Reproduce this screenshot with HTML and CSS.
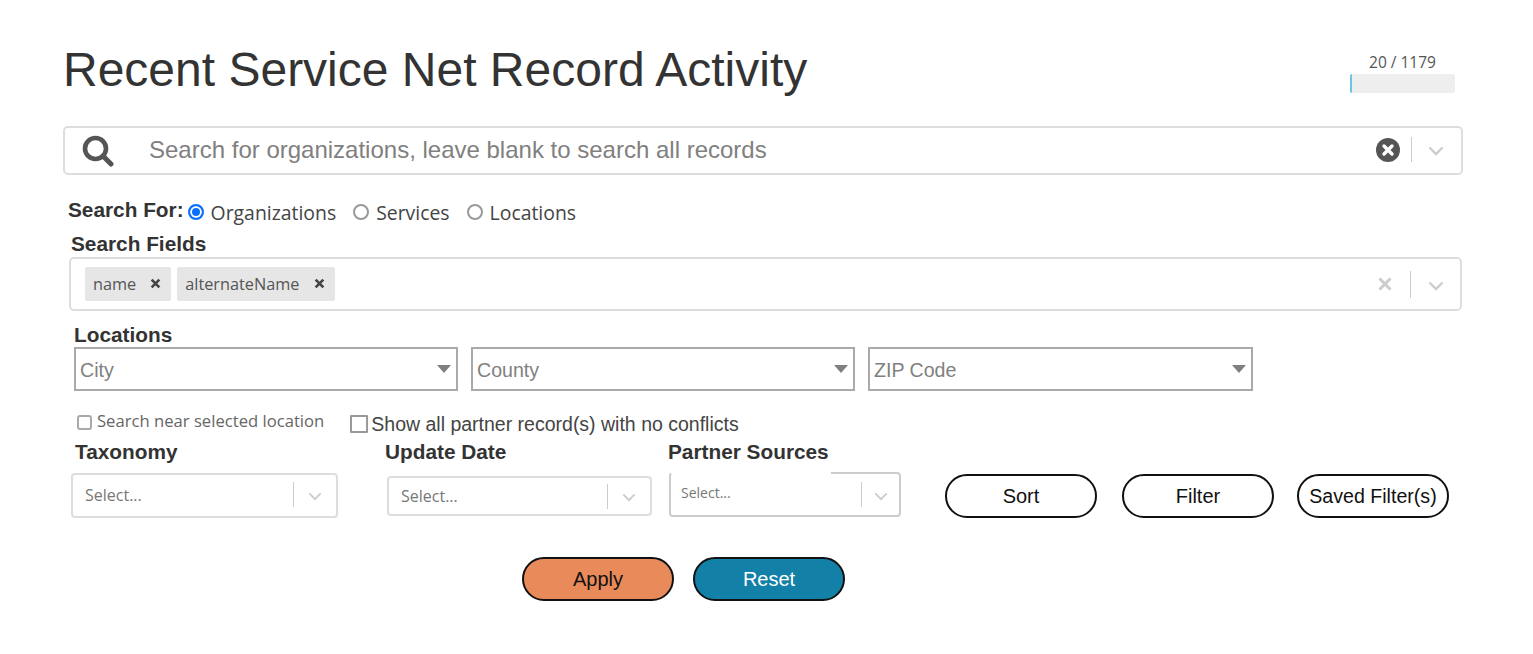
FILE: index.html
```html
<!DOCTYPE html>
<html lang="en">
<head>
<meta charset="utf-8">
<title>Recent Service Net Record Activity</title>
<link rel="stylesheet" href="styles.css">
</head>
<body>
<main class="page">
  <header class="head">
    <h1 class="title">Recent Service Net Record Activity</h1>
    <div class="progress">
      <div class="progress-text">20 / 1179</div>
      <div class="progress-track"><div class="progress-fill"></div></div>
    </div>
  </header>

  <div class="searchbox">
    <svg class="search-icon" viewBox="0 0 32 32" aria-hidden="true"><circle cx="13.5" cy="13.5" r="10.5" fill="none" stroke="#555" stroke-width="4.6"/><path d="M21 21l8 8" stroke="#555" stroke-width="5" stroke-linecap="round"/></svg>
    <span class="search-placeholder">Search for organizations, leave blank to search all records</span>
    <svg class="clear-icon" viewBox="0 0 24 24" aria-hidden="true"><circle cx="12" cy="12" r="12" fill="#555"/><path d="M8 8l8 8M16 8l-8 8" stroke="#fff" stroke-width="3.4" stroke-linecap="round"/></svg>
    <span class="sep sep-tall"></span>
    <svg class="chev chev-big" viewBox="0 0 16 10" aria-hidden="true"><path d="M1.5 1.5L8 8l6.5-6.5" fill="none" stroke="#ccc" stroke-width="2.4"/></svg>
  </div>

  <div class="search-for">
    <span class="label">Search For:</span>
    <span class="radio radio-on"></span><span class="radio-text">Organizations</span>
    <span class="radio radio-second"></span><span class="radio-text">Services</span>
    <span class="radio radio-third"></span><span class="radio-text">Locations</span>
  </div>

  <div class="label fields-label">Search Fields</div>
  <div class="multibox">
    <span class="tag">name<svg class="tag-x" viewBox="0 0 10 10" aria-hidden="true"><path d="M1.5 1.5l7 7M8.5 1.5l-7 7" stroke="#444" stroke-width="2.4"/></svg></span>
    <span class="tag">alternateName<svg class="tag-x" viewBox="0 0 10 10" aria-hidden="true"><path d="M1.5 1.5l7 7M8.5 1.5l-7 7" stroke="#444" stroke-width="2.4"/></svg></span>
    <svg class="multi-x" viewBox="0 0 14 14" aria-hidden="true"><path d="M1.5 1.5l11 11M12.5 1.5l-11 11" stroke="#ccc" stroke-width="3"/></svg>
    <span class="sep sep-multi"></span>
    <svg class="chev chev-big" viewBox="0 0 16 10" aria-hidden="true"><path d="M1.5 1.5L8 8l6.5-6.5" fill="none" stroke="#ccc" stroke-width="2.4"/></svg>
  </div>

  <div class="label locations-label">Locations</div>
  <div class="locations">
    <div class="dropdown"><span>City</span><i class="caret"></i></div>
    <div class="dropdown"><span>County</span><i class="caret"></i></div>
    <div class="dropdown"><span>ZIP Code</span><i class="caret"></i></div>
  </div>

  <div class="checks">
    <span class="check-small"></span><span class="check-small-text">Search near selected location</span>
    <span class="check-big"></span><span class="check-big-text">Show all partner record(s) with no conflicts</span>
  </div>

  <div class="filters">
    <div class="filter filter-tax">
      <div class="label">Taxonomy</div>
      <div class="select select-tax"><span class="select-text">Select...</span><span class="sep sep-small"></span><svg class="chev chev-small" viewBox="0 0 16 10" aria-hidden="true"><path d="M1.5 1.5L8 8l6.5-6.5" fill="none" stroke="#ccc" stroke-width="2.2"/></svg></div>
    </div>
    <div class="filter filter-date">
      <div class="label">Update Date</div>
      <div class="select select-date"><span class="select-text">Select...</span><span class="sep sep-small"></span><svg class="chev chev-small" viewBox="0 0 16 10" aria-hidden="true"><path d="M1.5 1.5L8 8l6.5-6.5" fill="none" stroke="#ccc" stroke-width="2.2"/></svg></div>
    </div>
    <div class="filter filter-partner">
      <div class="label">Partner Sources</div>
      <div class="select select-partner"><span class="select-text select-text-narrow">Select...</span><span class="sep sep-small"></span><svg class="chev chev-small" viewBox="0 0 16 10" aria-hidden="true"><path d="M1.5 1.5L8 8l6.5-6.5" fill="none" stroke="#ccc" stroke-width="2.2"/></svg></div>
    </div>
    <div class="pills">
      <button class="pill pill-white" type="button">Sort</button>
      <button class="pill pill-white" type="button">Filter</button>
      <button class="pill pill-white pill-saved" type="button">Saved Filter(s)</button>
    </div>
  </div>

  <div class="actions">
    <button class="pill pill-apply" type="button">Apply</button>
    <button class="pill pill-reset" type="button">Reset</button>
  </div>
</main>
</body>
</html>
```

FILE: styles.css
```css
* { box-sizing: border-box; }
html, body { margin: 0; padding: 0; background: #fff; }
body { font-family: "Liberation Sans", Arial, sans-serif; color: #333; overflow: hidden; }
.page { width: 1533px; height: 654px; padding-top: 41px; }

.head { display: flex; justify-content: space-between; height: 85px; padding: 0 78px 0 63px; }
.title { margin: 0; font-size: 48px; line-height: 57px; font-weight: 400; color: #333; white-space: nowrap; }
.progress { width: 105px; padding-top: 12px; }
.progress-text { font-family: "Open Sans", sans-serif; font-size: 15.5px; line-height: 18px; text-align: center; color: #555; }
.progress-track { height: 19px; margin-top: 3px; background: #eee; border-radius: 2px; overflow: hidden; }
.progress-fill { width: 2px; height: 100%; background: #6cc5e6; }

.searchbox { display: flex; align-items: center; width: 1400px; height: 49px; margin-left: 63px; padding-bottom: 2px; border: 2px solid #ddd; border-radius: 5px; }
.search-icon { width: 32px; height: 32px; margin: 2px 0 0 17px; flex: none; }
.search-placeholder { flex: 1; margin-left: 35px; font-size: 24px; color: #808080; white-space: nowrap; }
.clear-icon { width: 24px; height: 24px; flex: none; }
.sep { display: block; flex: none; width: 1px; background: #ccc; }
.sep-tall { height: 25px; margin-left: 11px; }
.chev { display: block; flex: none; }
.chev-big { width: 16px; height: 10px; margin: 3px 17px 0 16px; }

.label { font-size: 20.8px; line-height: 24px; font-weight: 700; color: #333; white-space: nowrap; }

.search-for { display: flex; align-items: center; height: 24px; margin: 25px 0 0 68px; }
.search-for .label { position: relative; top: -2px; }
.radio { width: 16px; height: 16px; flex: none; margin-left: 4px; border: 2px solid #999; border-radius: 50%; background: #fff; }
.radio-on { border-color: #0d6efd; background: #0d6efd; box-shadow: inset 0 0 0 2px #fff; }
.radio-second { margin-left: 17px; }
.radio-third { margin-left: 17px; }
.radio-text { margin-left: 7px; font-family: "Open Sans", sans-serif; font-size: 19.4px; color: #444; white-space: nowrap; }

.fields-label { margin: 8px 0 0 71px; }
.multibox { display: flex; align-items: center; width: 1393px; height: 54px; margin: 1px 0 0 69px; padding-left: 14px; border: 2px solid #ddd; border-radius: 5px; }
.tag { display: flex; align-items: center; height: 34px; margin-right: 6px; padding-left: 8px; background: #e6e6e6; border-radius: 2px; font-family: "Open Sans", sans-serif; font-size: 16.3px; color: #555; }
.tag-x { width: 11px; height: 11px; margin: -2px 10px 0 14px; }
.multi-x { width: 14px; height: 14px; margin-left: auto; }
.sep-multi { height: 27px; margin-left: 18px; }
.multibox .chev-big { margin: 3px 16px 0 17px; }

.locations-label { margin: 12px 0 0 74px; }
.locations { display: flex; gap: 13px; margin: 0 0 0 74px; }
.dropdown { display: flex; align-items: center; justify-content: space-between; width: 384px; height: 44px; padding: 2px 5px 0 4px; border: 2px solid #aaa; font-size: 19.6px; color: #808080; }
.dropdown:last-child { width: 385px; }
.caret { width: 0; height: 0; border-left: 7px solid transparent; border-right: 7px solid transparent; border-top: 8px solid #808080; margin-top: -2px; }

.checks { display: flex; align-items: center; height: 24px; margin: 21px 0 0 77px; }
.check-small { width: 15px; height: 15px; flex: none; border: 2px solid #aaa; border-radius: 3px; margin-top: -3px; }
.check-small-text { margin-left: 5px; font-family: "Open Sans", sans-serif; font-size: 16.65px; color: #666; white-space: nowrap; position: relative; top: -4px; }
.check-big { width: 18px; height: 18px; flex: none; margin-left: 26px; border: 2px solid #999; border-radius: 1px; }
.check-big-text { margin-left: 3px; font-size: 19.5px; color: #444; white-space: nowrap; }

.filters { display: flex; align-items: flex-start; margin-top: 4px; }
.filter { flex: none; }
.filter-tax { width: 267px; margin-left: 71px; }
.filter-tax .label { padding-left: 4px; }
.filter-date { width: 265px; margin-left: 49px; }
.filter-date .label { margin-left: -2px; }
.filter-partner { width: 232px; margin-left: 17px; }
.filter-partner .label { margin-left: -1px; }
.select { display: flex; align-items: center; background: #fff; border: 2px solid #ddd; border-radius: 4px; }
.select-tax { height: 45px; margin-top: 9px; padding-left: 12px; padding-bottom: 2px; }
.select-date { height: 40px; margin-top: 12px; padding-left: 12px; }
.select-partner { position: relative; height: 45px; margin-top: 8px; padding-left: 10px; border-color: #ccc; }
.select-partner::before { content: ""; position: absolute; left: 0; top: -2px; width: 160px; height: 2px; background: #fff; }
.select-text { flex: 1; font-family: "Open Sans", sans-serif; font-size: 16px; color: #777; }
.select-text-narrow { font-size: 14px; margin-top: -5px; }
.sep-small { height: 25px; }
.chev-small { width: 14px; height: 9px; margin: 3px 14px 0 14px; }
.select-partner .sep-small { margin-right: -2px; }
.select-partner .chev-small { margin-right: 11px; }

.pills { display: flex; gap: 25px; margin: 34px 0 0 44px; }
.pill { display: block; width: 152px; height: 44px; padding: 0; border: 2px solid #111; border-radius: 22px; background: #fff; font-family: "Liberation Sans", Arial, sans-serif; font-size: 20px; color: #111; white-space: nowrap; }
.pill-saved { margin-left: -2px; font-size: 19.6px; }
.actions { display: flex; gap: 19px; margin: 39px 0 0 522px; }
.pill-apply { background: #e88a5a; }
.pill-reset { background: #1380a7; color: #fff; }
```
